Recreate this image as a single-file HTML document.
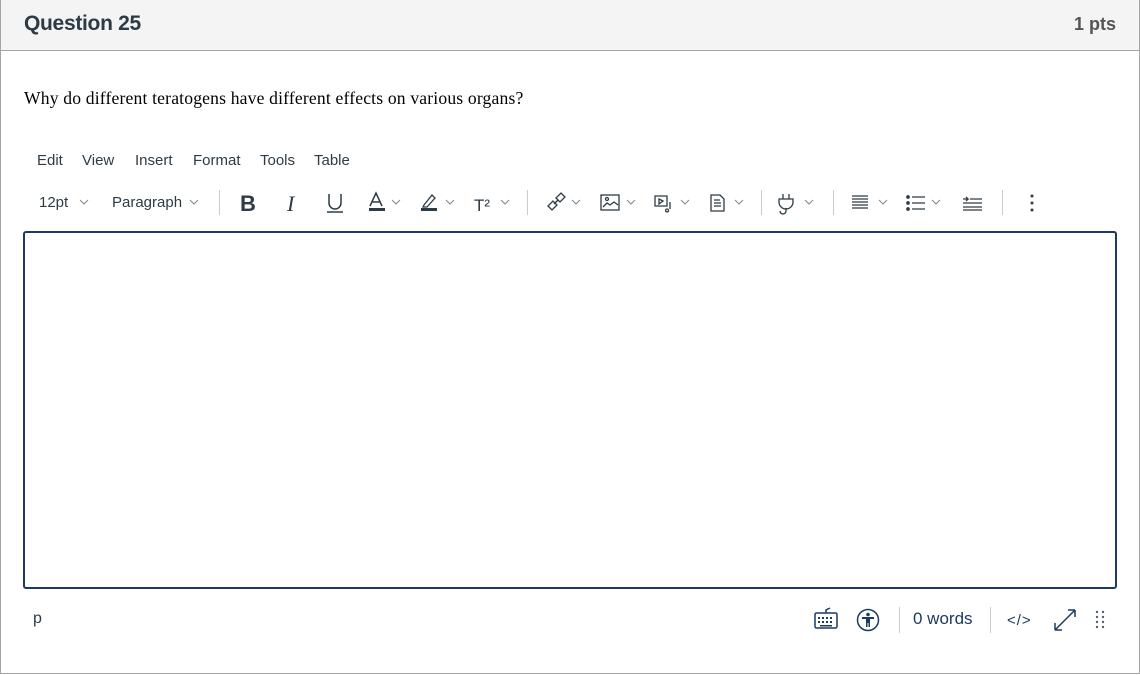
<!DOCTYPE html>
<html><head><meta charset="utf-8"><style>
*{margin:0;padding:0;box-sizing:border-box}
body{width:1140px;height:675px;background:#fff;font-family:"Liberation Sans",sans-serif;position:relative;overflow:hidden;color:#2d3b45}
.box{position:absolute;left:0;top:0;width:1140px;height:674px;border:1px solid #a5a5a5;border-top:none}
.hdr{position:absolute;left:1px;top:0;width:1138px;height:51px;background:#f4f4f4;border-bottom:1px solid #a5a5a5}
.a{position:absolute;white-space:nowrap}
.menu{font-size:15px;color:#2d3b45;top:152px}
.tb{font-size:15px;color:#2d3b45;top:194px}
svg{position:absolute}
</style></head><body>
<div class="box"></div>
<div class="hdr"></div>
<div class="a" style="left:24px;top:12px;font-size:21px;font-weight:bold;color:#2d3b45;letter-spacing:-0.3px">Question 25</div>
<div class="a" style="left:1074px;top:14px;font-size:18px;font-weight:bold;color:#555">1 pts</div>
<div class="a" style="left:24px;top:88px;font-family:'Liberation Serif',serif;font-size:17.6px;letter-spacing:0.17px;color:#000">Why do different teratogens have different effects on various organs?</div>

<div class="a menu" style="left:37px">Edit</div>
<div class="a menu" style="left:82px">View</div>
<div class="a menu" style="left:135px">Insert</div>
<div class="a menu" style="left:193px">Format</div>
<div class="a menu" style="left:260px">Tools</div>
<div class="a menu" style="left:314px">Table</div>

<div class="a tb" style="left:39px">12pt</div>
<div class="a tb" style="left:112px">Paragraph</div>
<svg width="1140" height="230" style="left:0;top:0" fill="none" stroke="#2d3b45">
<g stroke="#7d8a93" stroke-width="1">
<path d="M80 200l4 4 4-4"/><path d="M190 200l4 4 4-4"/><path d="M392 200l4 4 4-4"/><path d="M446 200l4 4 4-4"/><path d="M501 200l4 4 4-4"/>
<path d="M572 200l4 4 4-4"/><path d="M627 200l4 4 4-4"/><path d="M681 200l4 4 4-4"/><path d="M735 200l4 4 4-4"/><path d="M805 200l4 4 4-4"/><path d="M879 200l4 4 4-4"/><path d="M932 200l4 4 4-4"/>
</g>
<g stroke="#c7cdd1"><path d="M219.5 190v25M527.5 190v25M761.5 190v25M833.5 190v25M1002.5 190v25"/></g>
<text x="240" y="211" font-family="Liberation Sans" font-size="22" font-weight="bold" fill="#2d3b45" stroke="none">B</text>
<text x="287" y="211" font-family="Liberation Serif" font-size="22" font-style="italic" fill="#2d3b45" stroke="none">I</text>
<path d="M329 194v9a6 6 0 0 0 12 0v-9M327 212h16" stroke-width="1.5"/>
<path d="M370 206l6-13 6 13M372 202h8" stroke-width="1.5"/><rect x="369" y="208" width="16" height="3" fill="#2d3b45" stroke="none"/>
<path d="M424 205l8-10 3 3-8 9h-4z" stroke-width="1.3"/><rect x="421" y="208" width="16" height="3" fill="#2d3b45" stroke="none"/>
<text x="474" y="211" font-family="Liberation Sans" font-size="17" fill="#2d3b45" stroke="none">T²</text>
<g stroke-width="1.3">
<path d="M548 206l4 4 5-5-4-4zM556 198l4 4 5-5-4-4zM554 204l4-4"/>
<rect x="601" y="195" width="18" height="15"/><path d="M603 207l4-4 3 2 4-3 4 3"/><circle cx="607" cy="199" r="1.5"/>
<path d="M655 196h12v10h-12zM659 199l4 2-4 3zM670 202v7M667 209a1.5 1.5 0 1 0 .1 0"/>
<path d="M711 195h9l4 4v12h-13zM714 200h6M714 203h7M714 206h7"/>
<path d="M783 194v5M789 194v5M779 199h14v3a7 7 0 0 1-14 0zM786 208v3a3 3 0 0 1-6 0"/>
<path d="M852 196h16M852 199h16M852 202h16M852 205h16M852 208h16"/>
<circle cx="908" cy="197" r="1.2" fill="#2d3b45"/><circle cx="908" cy="203" r="1.2" fill="#2d3b45"/><circle cx="908" cy="209" r="1.2" fill="#2d3b45"/>
<path d="M912 197h13M912 203h13M912 209h13"/>
<path d="M963 199h5l-2-2M968 199l-2 2M970 199h12M963 203h19M963 207h19M963 210h19"/>
</g>
<g fill="#2d3b45" stroke="none"><circle cx="1032" cy="196" r="1.5"/><circle cx="1032" cy="203" r="1.5"/><circle cx="1032" cy="210" r="1.5"/></g>
</svg>

<div style="position:absolute;left:23px;top:231px;width:1094px;height:358px;border:2px solid #1c3a66;border-radius:3px"></div>

<div class="a" style="left:33px;top:610px;font-size:16px;color:#2d3b45">p</div>
<svg width="1140" height="675" style="left:0;top:0" fill="none" stroke="#1c3a66" stroke-width="1.5">
<rect x="815" y="613" width="22" height="15" rx="1.5"/><path d="M826 613v-3l4-2"/>
<g fill="#1c3a66" stroke="none"><rect x="818" y="617" width="2" height="2"/><rect x="822" y="617" width="2" height="2"/><rect x="826" y="617" width="2" height="2"/><rect x="830" y="617" width="2" height="2"/><rect x="818" y="621" width="2" height="2"/><rect x="822" y="621" width="2" height="2"/><rect x="826" y="621" width="2" height="2"/><rect x="830" y="621" width="2" height="2"/><rect x="820" y="625" width="12" height="1.5"/></g>
<circle cx="868" cy="620" r="10.5"/><g fill="#1c3a66" stroke="none"><circle cx="868" cy="614.5" r="1.8"/><path d="M862 617h12v2h-4v8h-1.5v-4h-1v4h-1.5v-8h-4z"/></g>
<path d="M899.5 607v26M990.5 607v26" stroke="#c7cdd1" stroke-width="1"/>
<path d="M1055 630l20-20M1055 630v-7M1055 630h7M1075 610h-7M1075 610v7"/>
<g fill="#55606b" stroke="none"><circle cx="1097" cy="612" r="1.2"/><circle cx="1103" cy="612" r="1.2"/><circle cx="1097" cy="617" r="1.2"/><circle cx="1103" cy="617" r="1.2"/><circle cx="1097" cy="622" r="1.2"/><circle cx="1103" cy="622" r="1.2"/><circle cx="1097" cy="627" r="1.2"/><circle cx="1103" cy="627" r="1.2"/></g>
</svg>
<div class="a" style="left:913px;top:609px;font-size:17px;color:#1c3a66">0 words</div>
<div class="a" style="left:1007px;top:612px;font-size:15px;color:#1c3a66;letter-spacing:1px">&lt;/&gt;</div>
</body></html>
